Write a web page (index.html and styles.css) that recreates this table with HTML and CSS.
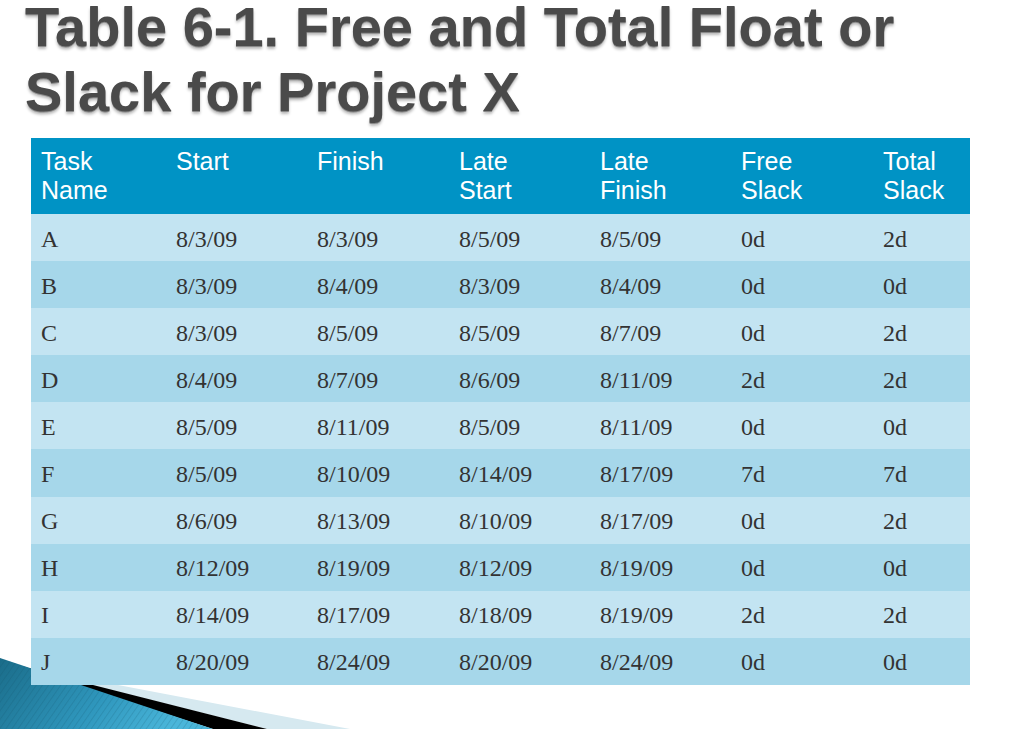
FILE: index.html
```html
<!DOCTYPE html>
<html>
<head>
<meta charset="utf-8">
<link rel="stylesheet" href="styles.css">
</head>
<body>
<div class="slide">
  <svg class="deco" width="360" height="80" viewBox="0 0 360 80" xmlns="http://www.w3.org/2000/svg">
    <defs>
      <linearGradient id="tg" x1="0" y1="0" x2="1" y2="0.3">
        <stop offset="0" stop-color="#1a6c89"/>
        <stop offset="0.6" stop-color="#2f97bd"/>
        <stop offset="1" stop-color="#4ab6da"/>
      </linearGradient>
      <pattern id="hatch" width="5" height="5" patternUnits="userSpaceOnUse" patternTransform="rotate(35)">
        <rect width="5" height="5" fill="none"/>
        <line x1="0" y1="0" x2="0" y2="5" stroke="#0d4f66" stroke-width="1" stroke-opacity="0.35"/>
      </pattern>
    </defs>
    <polygon points="-2,13 118,36 350,80 267,80" fill="#d6e9f0"/>
    <polygon points="-2,11 93,36 267,80 213,80" fill="#000"/>
    <polygon points="0,9 213,80 0,80" fill="url(#tg)"/>
    <polygon points="0,9 213,80 0,80" fill="url(#hatch)"/>
  </svg>
  <h1 class="title">Table 6-1. Free and Total Float or<br>Slack for Project X</h1>
  <table class="grid">
    <colgroup>
      <col class="c1"><col class="c2"><col class="c3"><col class="c4"><col class="c5"><col class="c6"><col class="c7">
    </colgroup>
    <thead>
      <tr><th>Task<br>Name</th><th>Start</th><th>Finish</th><th>Late<br>Start</th><th>Late<br>Finish</th><th>Free<br>Slack</th><th>Total<br>Slack</th></tr>
    </thead>
    <tbody>
      <tr><td>A</td><td>8/3/09</td><td>8/3/09</td><td>8/5/09</td><td>8/5/09</td><td>0d</td><td>2d</td></tr>
      <tr><td>B</td><td>8/3/09</td><td>8/4/09</td><td>8/3/09</td><td>8/4/09</td><td>0d</td><td>0d</td></tr>
      <tr><td>C</td><td>8/3/09</td><td>8/5/09</td><td>8/5/09</td><td>8/7/09</td><td>0d</td><td>2d</td></tr>
      <tr><td>D</td><td>8/4/09</td><td>8/7/09</td><td>8/6/09</td><td>8/11/09</td><td>2d</td><td>2d</td></tr>
      <tr><td>E</td><td>8/5/09</td><td>8/11/09</td><td>8/5/09</td><td>8/11/09</td><td>0d</td><td>0d</td></tr>
      <tr><td>F</td><td>8/5/09</td><td>8/10/09</td><td>8/14/09</td><td>8/17/09</td><td>7d</td><td>7d</td></tr>
      <tr><td>G</td><td>8/6/09</td><td>8/13/09</td><td>8/10/09</td><td>8/17/09</td><td>0d</td><td>2d</td></tr>
      <tr><td>H</td><td>8/12/09</td><td>8/19/09</td><td>8/12/09</td><td>8/19/09</td><td>0d</td><td>0d</td></tr>
      <tr><td>I</td><td>8/14/09</td><td>8/17/09</td><td>8/18/09</td><td>8/19/09</td><td>2d</td><td>2d</td></tr>
      <tr><td>J</td><td>8/20/09</td><td>8/24/09</td><td>8/20/09</td><td>8/24/09</td><td>0d</td><td>0d</td></tr>
    </tbody>
  </table>
</div>
</body>
</html>
```
FILE: styles.css
```css
html, body {
  margin: 0;
  padding: 0;
  background: #ffffff;
}
.slide {
  position: relative;
  width: 1024px;
  height: 729px;
  overflow: hidden;
}
.deco {
  position: absolute;
  left: 0;
  top: 649px;
  z-index: 0;
}
.title {
  margin: -6px 0 0 25px;
  font-family: "Liberation Sans", Arial, sans-serif;
  font-weight: bold;
  font-size: 56px;
  line-height: 65px;
  color: #4a4a4a;
  text-shadow: 0 1px 0 #8a8a8a, 0 3px 3px rgba(0,0,0,0.28);
  position: relative;
  z-index: 1;
}
.grid {
  position: relative;
  z-index: 1;
  margin: 14px 0 0 31px;
  border-collapse: collapse;
  table-layout: fixed;
  width: 939px;
}
.c1 { width: 135px; }
.c2 { width: 141px; }
.c3 { width: 142px; }
.c4 { width: 141px; }
.c5 { width: 141px; }
.c6 { width: 142px; }
.c7 { width: 97px; }
.grid th {
  background: #0093c5;
  color: #ffffff;
  font-family: "Liberation Sans", Arial, sans-serif;
  font-weight: normal;
  font-size: 25px;
  line-height: 29px;
  text-align: left;
  vertical-align: top;
  padding: 9px 0 9px 10px;
  height: 58px;
}
.grid td {
  font-family: "Liberation Serif", "Times New Roman", serif;
  font-size: 24px;
  color: #333333;
  padding: 3px 0 0 10px;
  height: 44.1px;
  vertical-align: middle;
}
.grid tbody tr:nth-child(odd) td { background: #c3e4f2; }
.grid tbody tr:nth-child(even) td { background: #a6d7ea; }
```
